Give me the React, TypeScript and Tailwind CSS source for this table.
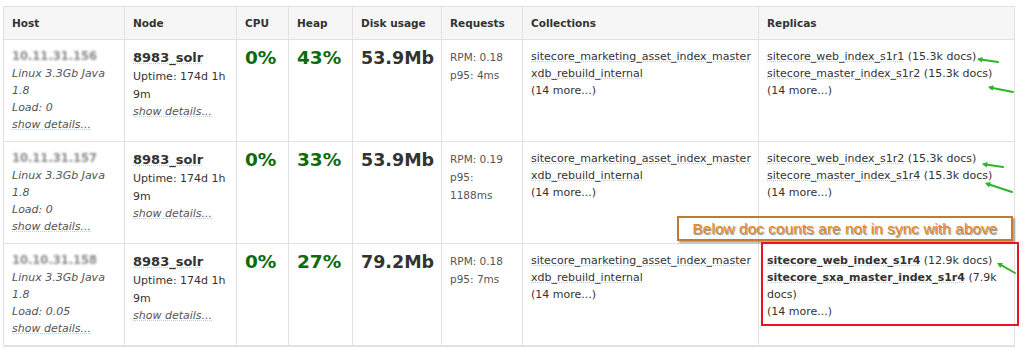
import React from "react";

type Row = {
  ip: string;
  load: string;
  cpu: string;
  heap: string;
  disk: string;
  rpm: string;
  p95: string;
  replicas: { name: string; docs: string }[];
  boldReplicas?: boolean;
  h: string;
};

const rows: Row[] = [
  {
    ip: "10.11.31.156",
    load: "0",
    cpu: "0%",
    heap: "43%",
    disk: "53.9Mb",
    rpm: "0.18",
    p95: "4ms",
    replicas: [
      { name: "sitecore_web_index_s1r1", docs: "(15.3k docs)" },
      { name: "sitecore_master_index_s1r2", docs: "(15.3k docs)" },
    ],
    h: "h-[102px]",
  },
  {
    ip: "10.11.31.157",
    load: "0",
    cpu: "0%",
    heap: "33%",
    disk: "53.9Mb",
    rpm: "0.19",
    p95: "1188ms",
    replicas: [
      { name: "sitecore_web_index_s1r2", docs: "(15.3k docs)" },
      { name: "sitecore_master_index_s1r4", docs: "(15.3k docs)" },
    ],
    h: "h-[101px]",
  },
  {
    ip: "10.10.31.158",
    load: "0.05",
    cpu: "0%",
    heap: "27%",
    disk: "79.2Mb",
    rpm: "0.18",
    p95: "7ms",
    replicas: [
      { name: "sitecore_web_index_s1r4", docs: "(12.9k docs)" },
      { name: "sitecore_sxa_master_index_s1r4", docs: "(7.9k docs)" },
    ],
    boldReplicas: true,
    h: "h-[101px]",
  },
];

const td = "border border-[#e2e2e2] align-top px-[8px] pt-[8px] pb-[8px]";
const th =
  "border border-[#e2e2e2] bg-[#f6f6f6] text-left font-bold text-[10.5px] text-[#333] px-[8px] align-middle";
const link = "underline decoration-dotted decoration-[#b5d0ea] underline-offset-[1px]";

function Arrow({ x1, y1, x2, y2 }: { x1: number; y1: number; x2: number; y2: number }) {
  const ang = Math.atan2(y2 - y1, x2 - x1);
  const L = 6;
  const a1 = ang + 0.5;
  const a2 = ang - 0.5;
  const p1 = `${x1 + L * Math.cos(a1)},${y1 + L * Math.sin(a1)}`;
  const p2 = `${x1 + L * Math.cos(a2)},${y1 + L * Math.sin(a2)}`;
  return (
    <g>
      <line x1={x1 + 2} y1={y1 + (y2 - y1) * 0.08} x2={x2} y2={y2} stroke="#2fb52a" strokeWidth={2} strokeLinecap="round" />
      <polygon points={`${x1},${y1} ${p1} ${p2}`} fill="#2fb52a" />
    </g>
  );
}

export default function App() {
  return (
    <div
      className="relative w-[1024px] h-[348px] bg-white overflow-hidden pt-[6px] pl-[3px]"
      style={{ fontFamily: '"DejaVu Sans", Verdana, sans-serif' }}
    >
      <table className="table-fixed border-collapse w-[1011px] text-[11px] leading-[17px] text-[#333] border-b-2 border-[#e2e2e2]">
        <colgroup>
          <col className="w-[121px]" />
          <col className="w-[112px]" />
          <col className="w-[52px]" />
          <col className="w-[64px]" />
          <col className="w-[89px]" />
          <col className="w-[81px]" />
          <col className="w-[236px]" />
          <col className="w-[256px]" />
        </colgroup>
        <thead>
          <tr className="h-[33px]">
            <th className={th}>Host</th>
            <th className={th}>Node</th>
            <th className={th}>CPU</th>
            <th className={th}>Heap</th>
            <th className={th}>Disk usage</th>
            <th className={th}>Requests</th>
            <th className={th}>Collections</th>
            <th className={th}>Replicas</th>
          </tr>
        </thead>
        <tbody>
          {rows.map((r, i) => (
            <tr key={i} className={r.h}>
              <td className={td}>
                <div className="font-bold text-[11.5px] text-[#8a8a8a] blur-[1.1px]">{r.ip}</div>
                <div className="italic text-[#555]">Linux 3.3Gb Java 1.8</div>
                <div className="italic text-[#555]">Load: {r.load}</div>
                <div className="italic text-[#555]">
                  <span className={link}>show details...</span>
                </div>
              </td>
              <td className={td}>
                <div className="font-bold text-[13px] leading-[20px] text-[#333]">
                  <span className={link}>8983_solr</span>
                </div>
                <div className="leading-[17.5px]">Uptime: 174d 1h 9m</div>
                <div className="italic text-[#555] leading-[17.5px]">
                  <span className={link}>show details...</span>
                </div>
              </td>
              <td className={td}>
                <div className="font-bold text-[18.5px] leading-[20px] text-[#0d6b0d]">{r.cpu}</div>
              </td>
              <td className={td}>
                <div className="font-bold text-[18.5px] leading-[20px] text-[#0d6b0d]">{r.heap}</div>
              </td>
              <td className={td}>
                <div className="font-bold text-[17.5px] leading-[20px] text-[#333]">{r.disk}</div>
              </td>
              <td className={td}>
                <div className="text-[10.5px] leading-[18px] text-[#555]">
                  <div>RPM: {r.rpm}</div>
                  <div>p95: {r.p95}</div>
                </div>
              </td>
              <td className={td}>
                <div>
                  <span className={link}>sitecore_marketing_asset_index_master</span>
                </div>
                <div>
                  <span className={link}>xdb_rebuild_internal</span>
                </div>
                <div>(14 more...)</div>
              </td>
              <td className={td}>
                {r.replicas.map((rep, j) => (
                  <div key={j}>
                    <span className={`${link} ${r.boldReplicas ? "font-bold" : ""}`}>{rep.name}</span> {rep.docs}
                  </div>
                ))}
                <div>(14 more...)</div>
              </td>
            </tr>
          ))}
        </tbody>
      </table>

      {/* annotation box */}
      <div className="absolute left-[677px] top-[216px] w-[336px] h-[25px] border-2 border-[#c47a2c] flex items-center justify-center shadow-[2px_2px_2px_rgba(0,0,0,0.35)]">
        <span
          className="text-[15.5px] text-[#e8861c] leading-none"
          style={{ fontFamily: '"Liberation Sans", Arial, sans-serif', textShadow: "1px 1px 1px rgba(0,0,0,0.45)" }}
        >
          Below doc counts are not in sync with above
        </span>
      </div>

      {/* red box */}
      <div className="absolute left-[761px] top-[242px] w-[258px] h-[84px] border-2 border-[#e8161c]" />

      {/* green arrows */}
      <svg className="absolute left-0 top-0 pointer-events-none" width={1024} height={348}>
        <Arrow x1={977} y1={59} x2={998} y2={62} />
        <Arrow x1={988} y1={87} x2={1013} y2={92} />
        <Arrow x1={982} y1={164} x2={1003} y2={167} />
        <Arrow x1={985} y1={183} x2={1012} y2={192} />
        <Arrow x1={997} y1={263} x2={1015} y2={273} />
      </svg>
    </div>
  );
}
